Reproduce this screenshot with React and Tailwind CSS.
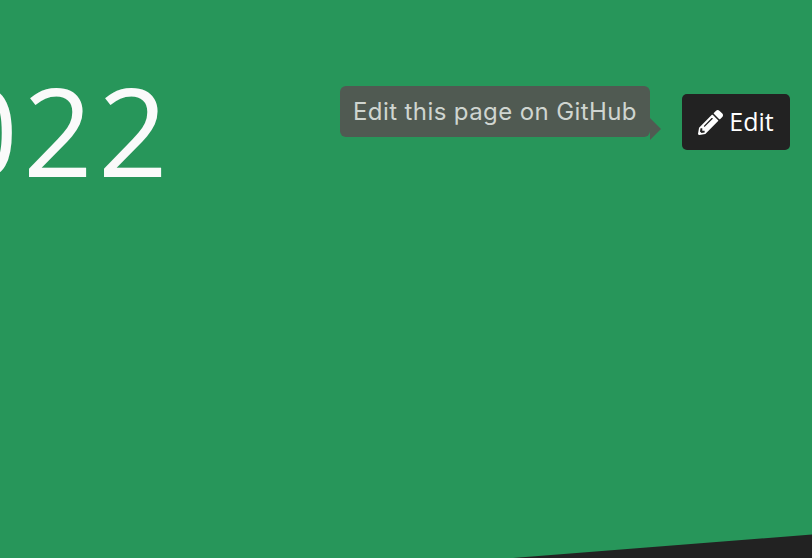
import React from "react";
import { FaPencilAlt } from "react-icons/fa";

export default function App() {
  return (
    <div className="relative h-[558px] w-[812px] overflow-hidden bg-[#27965a]">
      <div className="flex items-start justify-between pr-[22px]">
        <h1 className="ml-[-300px] mt-[45px] w-[473px] text-right font-['Open_Sans',sans-serif] text-[122px] font-normal leading-[170px] tracking-[5.2px] text-[#fafafa]">
          2022
        </h1>
        <a className="relative mt-[94px] flex h-[56px] w-[108px] items-center justify-center gap-[6px] rounded-[5px] bg-[#222222] font-['Open_Sans',sans-serif] text-[25px] text-white">
          <FaPencilAlt className="text-[25px]" />
          <span>Edit</span>
          {/* tooltip */}
          <div className="absolute right-[140px] top-[-8px] flex h-[51px] w-[310px] items-center justify-center rounded-[6px] bg-[#505a52] pt-[1px] font-['Inter',sans-serif] text-[24px] tracking-[0.4px] whitespace-nowrap text-[#cfd5d0]">
            Edit this page on GitHub
            <span className="absolute left-full top-[32px] h-0 w-0 border-y-[11px] border-l-[11px] border-y-transparent border-l-[#505a52]" />
          </div>
        </a>
      </div>
      <svg className="absolute bottom-0 left-0" width="812" height="26" viewBox="0 0 812 26">
        <polygon points="812,2.6 812,26 513,26" fill="#222222" />
      </svg>
    </div>
  );
}
